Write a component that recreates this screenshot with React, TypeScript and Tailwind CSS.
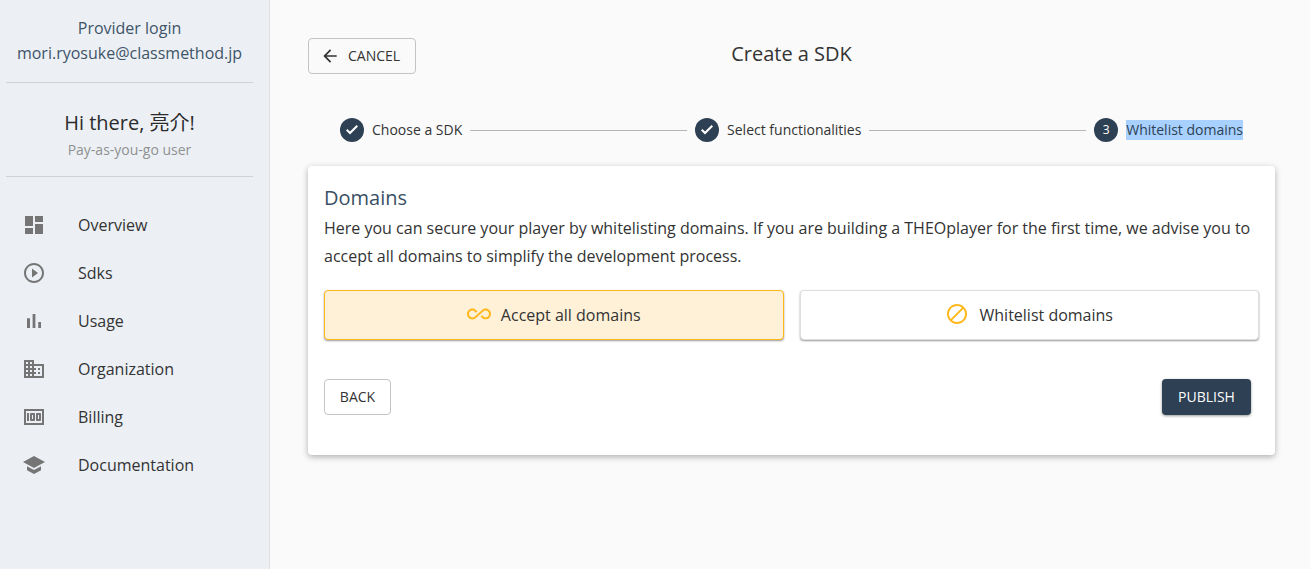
import React from "react";

const navItems = [
  { label: "Overview", d: "M3 13h8V3H3v10zm0 8h8v-6H3v6zm10 0h8V11h-8v10zm0-18v6h8V3h-8z" },
  { label: "Sdks", d: "M10 16.5l6-4.5-6-4.5v9zM12 2C6.48 2 2 6.48 2 12s4.48 10 10 10 10-4.48 10-10S17.52 2 12 2zm0 18c-4.41 0-8-3.59-8-8s3.59-8 8-8 8 3.59 8 8-3.59 8-8 8z" },
  { label: "Usage", d: "M5 9.2h3V19H5zM10.6 5h2.8v14h-2.8zm5.6 8H19v6h-2.8z" },
  { label: "Organization", d: "M12 7V3H2v18h20V7H12zM6 19H4v-2h2v2zm0-4H4v-2h2v2zm0-4H4V9h2v2zm0-4H4V5h2v2zm4 12H8v-2h2v2zm0-4H8v-2h2v2zm0-4H8V9h2v2zm0-4H8V5h2v2zm10 12h-8v-2h2v-2h-2v-2h2v-2h-2V9h8v10zm-2-8h-2v2h2v-2zm0 4h-2v2h2v-2z" },
  { label: "Billing", d: "M5 8h2v8H5zm7 0H9c-.55 0-1 .45-1 1v6c0 .55.45 1 1 1h3c.55 0 1-.45 1-1V9c0-.55-.45-1-1-1zm-1 6h-1v-4h1v4zm7-6h-3c-.55 0-1 .45-1 1v6c0 .55.45 1 1 1h3c.55 0 1-.45 1-1V9c0-.55-.45-1-1-1zm-1 6h-1v-4h1v4zM2 4v16h20V4H2zm2 14V6h16v12H4z" },
  { label: "Documentation", d: "M5 13.18v4L12 21l7-3.82v-4L12 17l-7-3.82zM12 3L1 9l11 6 11-6-11-6z" },
];

function StepCheck() {
  return (
    <svg viewBox="0 0 24 24" className="w-6 h-6 shrink-0">
      <circle cx="12" cy="12" r="12" fill="#2d4054" />
      <path d="M10 16.4l-4-4 1.41-1.41L10 13.57l6.59-6.58L18 8.4z" fill="#fff" />
    </svg>
  );
}

export default function App() {
  return (
    <div className="flex h-[569px] overflow-hidden bg-[#fafafa] text-[#333333] font-['Open_Sans','Noto_Sans_CJK_JP',sans-serif]">
      <aside className="w-[270px] shrink-0 bg-[#ecf0f5] border-r border-[#e0e0e0] pl-[6px] pr-[16px]">
        <div className="h-[83px] pt-4 border-b border-[#ced3d8] text-center text-base leading-[25px] text-[#3f5468]">
          <p>Provider login</p>
          <p>mori.ryosuke@classmethod.jp</p>
        </div>
        <div className="h-[94px] pt-[25px] border-b border-[#ced3d8] text-center">
          <p className="text-[20px] leading-[30px] text-[#2b2b2b]">Hi there, 亮介!</p>
          <p className="text-sm leading-[23px] text-[#8f9191]">Pay-as-you-go user</p>
        </div>
        <nav className="pt-6">
          {navItems.map((item) => (
            <div key={item.label} className="flex items-center h-12 pl-4">
              <svg viewBox="0 0 24 24" className="w-6 h-6 shrink-0 fill-[#757575]">
                <path d={item.d} />
              </svg>
              <span className="ml-8 text-base text-[#333333]">{item.label}</span>
            </div>
          ))}
        </nav>
      </aside>

      <main className="flex-1 min-w-0 pl-[38px] pr-[35px]">
        <div className="relative flex items-center justify-center h-9 mt-[38px]">
          <button className="absolute left-0 top-0 flex items-center h-9 w-[108px] pl-[11px] border border-[#c4c4c4] rounded text-sm text-[#333333]">
            <svg viewBox="0 0 24 24" className="w-5 h-5 fill-[#333333] mr-2">
              <path d="M20 11H7.83l5.59-5.59L12 4l-8 8 8 8 1.41-1.41L7.83 13H20v-2z" />
            </svg>
            CANCEL
          </button>
          <h1 className="text-[20px] leading-[30px] text-[#333333] -mt-[4px]">Create a SDK</h1>
        </div>

        <div className="flex items-center h-6 mt-11 px-8 text-sm">
          <StepCheck />
          <span className="ml-2 text-[#333333]">Choose a SDK</span>
          <div className="flex-1 h-px bg-[#b5b5b5] mx-2" />
          <StepCheck />
          <span className="ml-2 text-[#333333]">Select functionalities</span>
          <div className="flex-1 h-px bg-[#b5b5b5] mx-2" />
          <div className="flex items-center justify-center w-6 h-6 shrink-0 rounded-full bg-[#2d4054] text-white text-xs">3</div>
          <span className="ml-2 bg-[#a8d1ff] text-[#2d4054] leading-5">Whitelist domains</span>
        </div>

        <section className="mt-6 h-[289px] bg-white rounded px-4 pt-[17px] shadow-[0_2px_6px_rgba(0,0,0,0.3)]">
          <h2 className="text-[20px] leading-[30px] text-[#3a4f63]">Domains</h2>
          <p className="text-base leading-7 text-[#333333] mt-px">
            Here you can secure your player by whitelisting domains. If you are building a THEOplayer for the first time, we advise you to accept all domains to simplify the development process.
          </p>

          <div className="flex gap-4 mt-5">
            <button className="flex-1 flex items-center justify-center h-[50px] bg-[#fff1d7] border border-[#ffb81c] rounded text-base text-[#333333] shadow-[0_1px_2px_rgba(0,0,0,0.4)]">
              <svg viewBox="0 0 24 24" className="w-6 h-6 fill-[#ffb81c] mr-[10px] -mt-[3px]">
                <path d="M18.6 6.62c-1.44 0-2.8.56-3.77 1.53L12 10.66 10.48 12h.01L7.8 14.39c-.64.64-1.49.99-2.4.99-1.87 0-3.39-1.51-3.39-3.38S3.53 8.62 5.4 8.62c.91 0 1.76.35 2.44 1.03l1.13 1 1.51-1.34L9.22 8.2C8.2 7.18 6.84 6.62 5.4 6.62 2.42 6.62 0 9.04 0 12s2.42 5.38 5.4 5.38c1.44 0 2.8-.56 3.77-1.53l2.83-2.5.01.01L13.52 12h-.01l2.69-2.39c.64-.64 1.49-.99 2.4-.99 1.87 0 3.39 1.51 3.39 3.38s-1.52 3.38-3.39 3.38c-.9 0-1.76-.35-2.44-1.03l-1.14-1.01-1.51 1.34 1.27 1.12c1.02 1.01 2.37 1.57 3.82 1.57 2.98 0 5.4-2.41 5.4-5.38s-2.42-5.37-5.4-5.37z" />
              </svg>
              Accept all domains
            </button>
            <button className="flex-1 flex items-center justify-center h-[50px] bg-white border border-[#dedede] rounded text-base text-[#333333] shadow-[0_1px_2px_rgba(0,0,0,0.4)]">
              <svg viewBox="0 0 24 24" className="w-6 h-6 fill-[#ffb81c] -ml-px mr-[11px] -mt-[3px]">
                <path d="M12 2C6.48 2 2 6.48 2 12s4.48 10 10 10 10-4.48 10-10S17.52 2 12 2zM4 12c0-4.42 3.58-8 8-8 1.85 0 3.55.63 4.9 1.69L5.69 16.9C4.63 15.55 4 13.85 4 12zm8 8c-1.85 0-3.55-.63-4.9-1.69L18.31 7.1C19.37 8.45 20 10.15 20 12c0 4.42-3.58 8-8 8z" />
              </svg>
              Whitelist domains
            </button>
          </div>

          <div className="flex justify-between mt-[39px] pr-2">
            <button className="h-9 w-[67px] border border-[#c4c4c4] rounded text-sm text-[#333333]">BACK</button>
            <button className="h-9 w-[89px] bg-[#2d4054] rounded text-sm text-white shadow-[0_1px_3px_rgba(0,0,0,0.4)]">PUBLISH</button>
          </div>
        </section>
      </main>
    </div>
  );
}
